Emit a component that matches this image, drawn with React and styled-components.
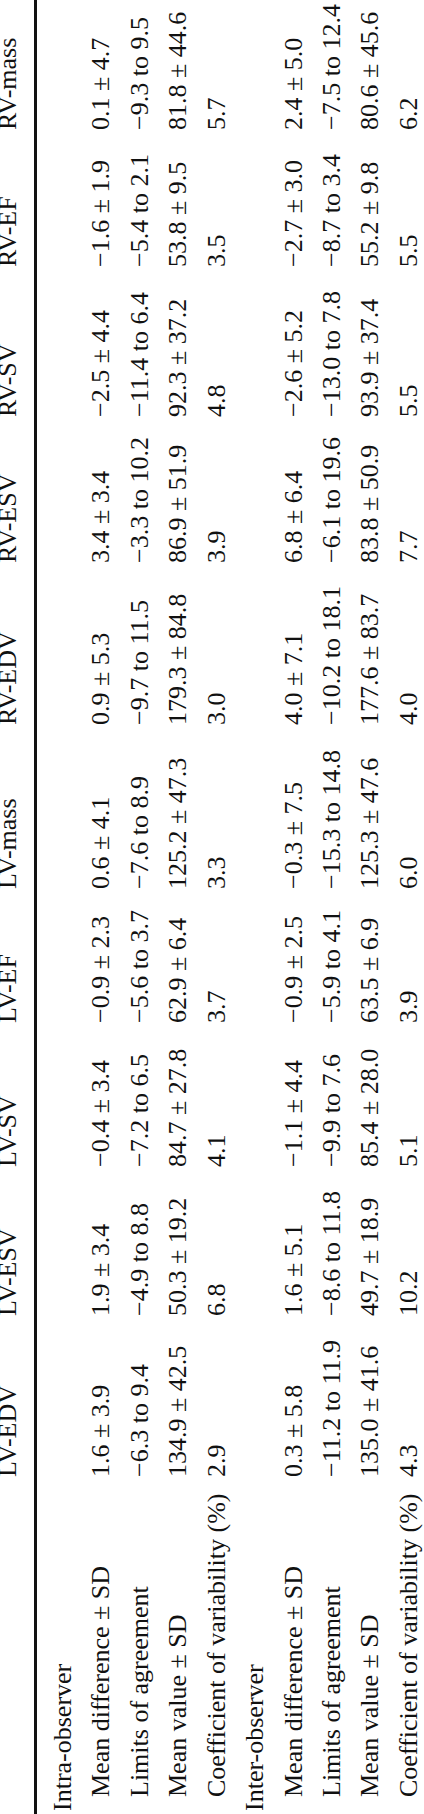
import React from 'react';
import styled, { createGlobalStyle } from 'styled-components';

const GlobalStyle = createGlobalStyle`
  html, body {
    margin: 0;
    padding: 0;
    background: #fff;
  }
`;

const columns = ['LV-EDV', 'LV-ESV', 'LV-SV', 'LV-EF', 'LV-mass', 'RV-EDV', 'RV-ESV', 'RV-SV', 'RV-EF', 'RV-mass'];
// widths along the (unrotated) table, first one is the label column
const widths = [337, 161, 149, 144, 134, 164, 162, 146, 150, 137, 130];

const groups = [
  {
    title: 'Intra-observer',
    rows: [
      ['Mean difference ± SD', '1.6 ± 3.9', '1.9 ± 3.4', '−0.4 ± 3.4', '−0.9 ± 2.3', '0.6 ± 4.1', '0.9 ± 5.3', '3.4 ± 3.4', '−2.5 ± 4.4', '−1.6 ± 1.9', '0.1 ± 4.7'],
      ['Limits of agreement', '−6.3 to 9.4', '−4.9 to 8.8', '−7.2 to 6.5', '−5.6 to 3.7', '−7.6 to 8.9', '−9.7 to 11.5', '−3.3 to 10.2', '−11.4 to 6.4', '−5.4 to 2.1', '−9.3 to 9.5'],
      ['Mean value ± SD', '134.9 ± 42.5', '50.3 ± 19.2', '84.7 ± 27.8', '62.9 ± 6.4', '125.2 ± 47.3', '179.3 ± 84.8', '86.9 ± 51.9', '92.3 ± 37.2', '53.8 ± 9.5', '81.8 ± 44.6'],
      ['Coefficient of variability (%)', '2.9', '6.8', '4.1', '3.7', '3.3', '3.0', '3.9', '4.8', '3.5', '5.7'],
    ],
  },
  {
    title: 'Inter-observer',
    rows: [
      ['Mean difference ± SD', '0.3 ± 5.8', '1.6 ± 5.1', '−1.1 ± 4.4', '−0.9 ± 2.5', '−0.3 ± 7.5', '4.0 ± 7.1', '6.8 ± 6.4', '−2.6 ± 5.2', '−2.7 ± 3.0', '2.4 ± 5.0'],
      ['Limits of agreement', '−11.2 to 11.9', '−8.6 to 11.8', '−9.9 to 7.6', '−5.9 to 4.1', '−15.3 to 14.8', '−10.2 to 18.1', '−6.1 to 19.6', '−13.0 to 7.8', '−8.7 to 3.4', '−7.5 to 12.4'],
      ['Mean value ± SD', '135.0 ± 41.6', '49.7 ± 18.9', '85.4 ± 28.0', '63.5 ± 6.9', '125.3 ± 47.6', '177.6 ± 83.7', '83.8 ± 50.9', '93.9 ± 37.4', '55.2 ± 9.8', '80.6 ± 45.6'],
      ['Coefficient of variability (%)', '4.3', '10.2', '5.1', '3.9', '6.0', '4.0', '7.7', '5.5', '5.5', '6.2'],
    ],
  },
];

const App = () => {
  let rowIndex = 0;
  return (
    <Page>
      <GlobalStyle />
      <Sheet>
        <Table>
          <colgroup>
            {widths.map((w, i) => (
              <col key={i} style={{ width: w }} />
            ))}
          </colgroup>
          <thead>
            <tr>
              <HeadCell />
              {columns.map(c => (
                <HeadCell key={c}>{c}</HeadCell>
              ))}
            </tr>
          </thead>
          <tbody>
            {groups.map(group => {
              const groupFirst = rowIndex === 0;
              rowIndex += 1;
              return (
                <React.Fragment key={group.title}>
                  <tr>
                    <LabelCell $first={groupFirst}>{group.title}</LabelCell>
                    {columns.map(c => (
                      <Cell key={c} $first={groupFirst} />
                    ))}
                  </tr>
                  {group.rows.map(row => {
                    rowIndex += 1;
                    return (
                      <tr key={row[0]}>
                        <LabelCell $indent>{row[0]}</LabelCell>
                        {row.slice(1).map((v, i) => (
                          <Cell key={i}>{v}</Cell>
                        ))}
                      </tr>
                    );
                  })}
                </React.Fragment>
              );
            })}
          </tbody>
        </Table>
      </Sheet>
    </Page>
  );
};

export default App;

const Page = styled.div`
  width: 424px;
  height: 1814px;
  overflow: hidden;
  background: #fff;
`;

// the table is printed landscape: lay it out 1814 wide and turn it a quarter left
const Sheet = styled.div`
  width: 1814px;
  height: 424px;
  overflow: hidden;
  transform-origin: 0 0;
  transform: translateY(1814px) rotate(-90deg);
  font-family: 'Liberation Serif', 'Times New Roman', serif;
  font-size: 26px;
  line-height: 38.44px;
  color: #111;
`;

const Table = styled.table`
  width: 1814px;
  table-layout: fixed;
  border-collapse: separate;
  border-spacing: 0;
  margin-top: -11px;
`;

const HeadCell = styled.th`
  padding: 0 0 6.56px 0;
  border-bottom: 3px solid #111;
  text-align: left;
  font-weight: normal;
  white-space: nowrap;
`;

const Cell = styled.td`
  padding: ${props => (props.$first ? '7px' : '0')} 0 0 0;
  white-space: nowrap;
  vertical-align: top;
`;

const LabelCell = styled(Cell)`
  padding-left: ${props => (props.$indent ? '17px' : '3px')};
`;
